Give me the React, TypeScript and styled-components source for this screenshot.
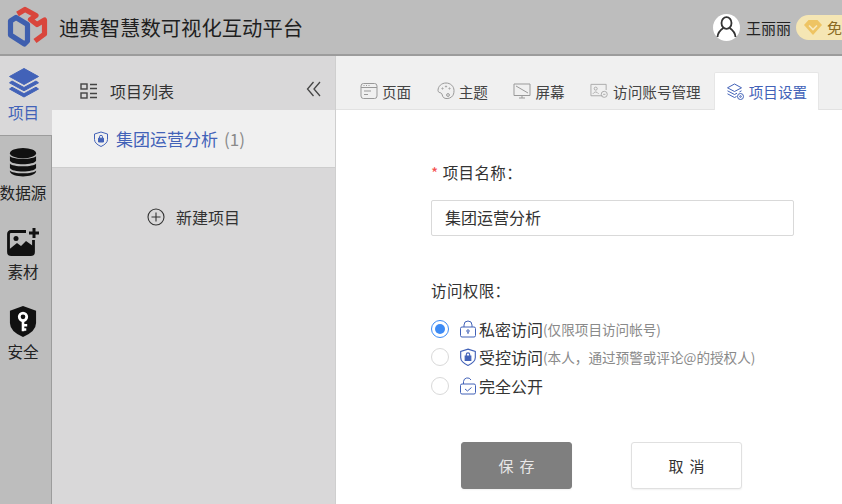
import { FunctionComponent, ReactNode } from 'react';
import styled, { createGlobalStyle } from 'styled-components';

const BLUE = '#4262b8';

const GlobalStyle = createGlobalStyle`
  html, body {
    margin: 0;
    padding: 0;
    background: #fff;
  }
  * {
    box-sizing: border-box;
  }
  body {
    font-family: "Noto Sans CJK SC", "Liberation Sans", sans-serif;
  }
`;

const Page = styled.div`
  width: 842px;
  height: 504px;
  display: flex;
  flex-direction: column;
  overflow: hidden;
`;

const Header = styled.header`
  height: 56px;
  flex: none;
  display: flex;
  align-items: center;
  background: #bdbdbd;
  border-bottom: 2px solid #9c9c9c;
  padding-left: 6px;
`;

const Title = styled.h1`
  margin: 0 0 0 11px;
  font-size: 20.35px;
  font-weight: 400;
  line-height: 28px;
  color: #1f1f1f;
  white-space: nowrap;
`;

const UserArea = styled.div`
  margin-left: auto;
  display: flex;
  align-items: center;
  width: 129px;
  flex: none;
`;

const Avatar = styled.div`
  width: 27px;
  height: 27px;
  border-radius: 50%;
  background: #fff;
  display: flex;
  align-items: center;
  justify-content: center;
  flex: none;
`;

const UserName = styled.span`
  margin-left: 6px;
  font-size: 15px;
  color: #222;
  white-space: nowrap;
`;

const Badge = styled.div`
  margin-left: 5px;
  flex: 1;
  height: 25px;
  border-radius: 13px 0 0 13px;
  background: #f5e6b4;
  display: flex;
  align-items: center;
  padding-left: 8px;
  gap: 5px;
  font-size: 15px;
  color: #8a6a22;
  white-space: nowrap;
`;

const Body = styled.div`
  flex: 1;
  min-height: 0;
  display: flex;
`;

const SideRail = styled.nav`
  width: 52px;
  flex: none;
  display: flex;
  flex-direction: column;
  background: #bdbdbd;
  border-right: 1px solid #9c9c9c;
`;

const RailItem = styled.div<{ $active?: boolean }>`
  height: 79.5px;
  flex: none;
  margin-right: ${({ $active }) => ($active ? '-1px' : '0')};
  padding: 11px 5px 0 0;
  display: flex;
  flex-direction: column;
  align-items: center;
  background: ${({ $active }) => ($active ? '#d9d8d9' : 'transparent')};
  border-bottom: ${({ $active }) => ($active ? '1px solid #9c9c9c' : 'none')};
  color: ${({ $active }) => ($active ? BLUE : '#222')};
`;

const RailIcon = styled.span`
  height: 32px;
  flex: none;
  display: flex;
  align-items: center;
`;

const RailLabel = styled.span`
  margin-top: 2px;
  font-size: 15.6px;
  line-height: 22px;
  white-space: nowrap;
`;

const ProjectPanel = styled.aside`
  width: 284px;
  flex: none;
  display: flex;
  flex-direction: column;
  background: #d9d8d9;
  border-right: 1px solid #cfcfcf;
`;

const PanelHead = styled.div`
  height: 54px;
  flex: none;
  display: flex;
  align-items: center;
  padding: 16px 13px 0 28px;
  font-size: 16px;
  color: #333;
`;

const PanelTitle = styled.span`
  margin-left: 12px;
`;

const Collapse = styled.span`
  margin-left: auto;
  display: flex;
  margin-top: -4px;
`;

const ProjectRow = styled.div`
  height: 58px;
  flex: none;
  display: flex;
  align-items: center;
  padding-left: 41px;
  background: #f0f0f0;
  border-bottom: 1px solid #cdcdcd;
  font-size: 17px;
  color: ${BLUE};
`;

const ProjectName = styled.span`
  margin-left: 7px;
`;

const ProjectCount = styled.span`
  margin-left: 6px;
  color: #8a8a8a;
`;

const NewProject = styled.div`
  margin-top: 38px;
  display: flex;
  align-items: center;
  padding-left: 95px;
  font-size: 16px;
  line-height: 22px;
  color: #333;
  gap: 11px;
`;

const Main = styled.main`
  flex: 1;
  min-width: 0;
  display: flex;
  flex-direction: column;
  background: #fff;
`;

const TabBar = styled.div`
  height: 54px;
  flex: none;
  display: flex;
  align-items: flex-end;
  background: #f0f0f0;
  border-bottom: 1px solid #e2e2e2;
  padding-left: 24px;
`;

const Tab = styled.div<{ $active?: boolean }>`
  height: ${({ $active }) => ($active ? '38px' : '36px')};
  display: flex;
  align-items: center;
  gap: 4px;
  padding: ${({ $active }) => ($active ? '0 11px' : '0')};
  margin-left: ${({ $active }) => ($active ? '-12.5px' : '0')};
  margin-right: ${({ $active }) => ($active ? '0' : '25.5px')};
  margin-bottom: ${({ $active }) => ($active ? '-1px' : '0')};
  font-size: 14.6px;
  white-space: nowrap;
  color: ${({ $active }) => ($active ? BLUE : '#444')};
  background: ${({ $active }) => ($active ? '#fff' : 'transparent')};
  border: ${({ $active }) => ($active ? '1px solid #e6e6e6' : 'none')};
  border-bottom: none;
  border-radius: 2px 2px 0 0;
`;

const Form = styled.form`
  padding: 50px 0 0 95px;
  display: flex;
  flex-direction: column;
`;

const FieldLabel = styled.div`
  font-size: 15.5px;
  line-height: 24px;
  color: #333;
  letter-spacing: 0.4px;
`;

const Required = styled.span`
  color: #f5504f;
  margin-right: 4px;
`;

const NameInput = styled.div`
  margin-top: 16px;
  width: 363px;
  height: 36px;
  border: 1px solid #d9d9d9;
  border-radius: 2px;
  display: flex;
  align-items: center;
  padding: 0 0 3px 13px;
  font-size: 16px;
  color: #333;
`;

const AccessLabel = styled(FieldLabel)`
  margin-top: 42px;
`;

const RadioList = styled.div`
  margin-top: 12.5px;
  display: flex;
  flex-direction: column;
`;

const RadioRow = styled.div`
  height: 28.5px;
  display: flex;
  align-items: center;
`;

const Radio = styled.span<{ $checked?: boolean }>`
  width: 18px;
  height: 18px;
  flex: none;
  border-radius: 50%;
  border: 1px solid ${({ $checked }) => ($checked ? '#3d8bf5' : '#d9d9d9')};
  background: #fff;
  display: flex;
  align-items: center;
  justify-content: center;
  margin-right: 10px;
  &::after {
    content: '';
    display: ${({ $checked }) => ($checked ? 'block' : 'none')};
    width: 10px;
    height: 10px;
    border-radius: 50%;
    background: #3d8bf5;
  }
`;

const RadioIcon = styled.span`
  width: 18px;
  height: 18px;
  flex: none;
  display: flex;
  margin-right: 2px;
`;

const RadioText = styled.span`
  font-size: 16px;
  color: #333;
  white-space: nowrap;
`;

const RadioHint = styled.span`
  font-size: 13.6px;
  color: #8a8a8a;
  white-space: nowrap;
`;

const Actions = styled.div`
  margin: 42px 0 0 30px;
  display: flex;
  gap: 59px;
`;

const Button = styled.div<{ $primary?: boolean }>`
  width: 111px;
  height: 47px;
  padding-left: 6px;
  border-radius: 3px;
  display: flex;
  align-items: center;
  justify-content: center;
  font-size: 15px;
  letter-spacing: 6px;
  color: ${({ $primary }) => ($primary ? '#e8e8e8' : '#333')};
  background: ${({ $primary }) => ($primary ? '#7f7f7f' : '#fff')};
  border: 1px solid ${({ $primary }) => ($primary ? '#7f7f7f' : '#e0e0e0')};
  box-shadow: 0 1px 2px rgba(0, 0, 0, 0.06);
`;

const Logo = () => (
  <svg width="42" height="42" viewBox="6 6 42 42" fill="none" strokeLinejoin="round" strokeWidth="5.2">
    <path d="M10.5 21 L16 17.5 L27.5 24.5 V41 L24.5 44 L10.5 35 Z" stroke="#3f5fae" />
    <path d="M17.5 14 L25 9.5 L36 15.5 L30.5 19.5 L37 24.5 L44.5 20 V34 L35 41" stroke="#d9463c" />
  </svg>
);

const LayersSolid = () => (
  <svg width="32" height="32" viewBox="0 0 32 32" fill={BLUE} stroke={BLUE} strokeLinejoin="round">
    <path d="M16 1.5 L30.5 9.5 L16 17.5 L1.5 9.5 Z" />
    <path d="M4 14 L16 20.5 L28 14 L30.5 15.8 L16 23.8 L1.5 15.8 Z" />
    <path d="M4 20.2 L16 26.7 L28 20.2 L30.5 22 L16 30 L1.5 22 Z" />
  </svg>
);

const Database = () => (
  <svg width="28" height="31" viewBox="0 0 30 32" fill="#111">
    <ellipse cx="15" cy="6" rx="14" ry="5.5" />
    <path d="M1 9 C3 13 27 13 29 9 V14 C27 19 3 19 1 14 Z" />
    <path d="M1 17 C3 21 27 21 29 17 V22 C27 27 3 27 1 22 Z" />
    <path d="M1 24.5 C3 28.5 27 28.5 29 24.5 V26 C27 32.5 3 32.5 1 26 Z" />
  </svg>
);

const ImagePlus = () => (
  <svg width="32" height="28" viewBox="0 0 32 28" fill="#111">
    <path
      d="M19 3.5 H4 Q1.5 3.5 1.5 6 V24 Q1.5 26.5 4 26.5 H24 Q26.5 26.5 26.5 24 V12"
      fill="none"
      stroke="#111"
      strokeWidth="2.8"
    />
    <path d="M2 26 V21.5 L10 15 L14 18 L19 13 L26 18 V26 Z" />
    <circle cx="9" cy="10.5" r="2.5" />
    <path d="M25.5 0 H28.5 V3.5 H32 V6.5 H28.5 V10 H25.5 V6.5 H22 V3.5 H25.5 Z" />
  </svg>
);

const ShieldKey = () => (
  <svg width="28" height="31" viewBox="0 0 30 33">
    <path d="M15 0 L29 5 V18 Q29 27 15 33 Q1 27 1 18 V5 Z" fill="#111" />
    <circle cx="15" cy="11.5" r="4" fill="none" stroke="#fff" strokeWidth="3" />
    <path d="M15 15 V27 M15 20.5 H19.5 M15 25 H18.5" stroke="#fff" strokeWidth="2.8" fill="none" />
  </svg>
);

const ListIcon = () => (
  <svg width="18" height="18" viewBox="0 0 18 18" fill="none" stroke="#444" strokeWidth="1.4">
    <rect x="1" y="2" width="6" height="5" />
    <rect x="1" y="11" width="6" height="5" />
    <path d="M10 2.5 H17 M10 6.5 H17 M10 11.5 H17 M10 15.5 H17" />
  </svg>
);

const ChevronsLeft = () => (
  <svg width="16" height="16" viewBox="0 0 16 16" fill="none" stroke="#444" strokeWidth="1.3">
    <path d="M7.5 1 L1.5 8 L7.5 15 M14 1 L8 8 L14 15" />
  </svg>
);

const ShieldLock = ({ size = 16 }: { size?: number }) => (
  <svg width={size} height={size} viewBox="0 0 16 16" fill="none" stroke={BLUE} strokeWidth="1">
    <path d="M8 1 L14.5 3 V8.5 Q14.5 12.5 8 15.5 Q1.5 12.5 1.5 8.5 V3 Z" />
    <path d="M5.5 7.2 H10.5 V11 H5.5 Z" fill={BLUE} />
    <path d="M6.5 7 V5.8 A1.5 1.5 0 0 1 9.5 5.8 V7" />
  </svg>
);

const PlusCircle = () => (
  <svg width="18" height="18" viewBox="0 0 18 18" fill="none" stroke="#333" strokeWidth="1.1">
    <circle cx="9" cy="9" r="8" />
    <path d="M9 4.5 V13.5 M4.5 9 H13.5" />
  </svg>
);

const UserIcon = () => (
  <svg width="21" height="22" viewBox="0 0 21 22" fill="none" stroke="#333" strokeWidth="1.8">
    <ellipse cx="10.5" cy="7" rx="5" ry="5.8" />
    <path d="M1.5 21 C2 15.5 6 13 7.5 12 M19.5 21 C19 15.5 15 13 13.5 12" />
  </svg>
);

const Gem = () => (
  <svg width="18" height="16" viewBox="0 0 18 16">
    <path d="M4.5 1 H13.5 L18 6 L9 16 L0 6 Z" fill="#eec463" />
    <path d="M5 6.5 L9 10.5 L13 6.5" fill="none" stroke="#f8e9bd" strokeWidth="1.6" />
  </svg>
);

const PageIcon = () => (
  <svg width="18" height="18" viewBox="0 0 18 18" fill="none" stroke="#999" strokeWidth="1">
    <rect x="1" y="1.5" width="16" height="15" rx="2.5" />
    <path d="M1 5.5 H17 M4 9 H11 M4 12.5 H8" />
    <path d="M3.5 3.5 H4.5 M6 3.5 H7 M8.5 3.5 H9.5" />
  </svg>
);

const PaletteIcon = () => (
  <svg width="18" height="18" viewBox="0 0 18 18" fill="none" stroke="#999" strokeWidth="1">
    <path d="M9 1 C4.5 1 1 4.3 1 8.5 C1 10.5 3 10.5 4 11 C5.5 11.7 5 14 6.5 15.5 C8 17 12 17 14.5 15 C16.5 13.4 17 11 17 8.5 C17 4.3 13.5 1 9 1 Z" />
    <circle cx="5.5" cy="6.5" r=".6" />
    <circle cx="9" cy="4.5" r=".6" />
    <circle cx="12.5" cy="6.5" r=".6" />
    <circle cx="11" cy="13" r="1.4" />
  </svg>
);

const ScreenIcon = () => (
  <svg width="18" height="18" viewBox="0 0 18 18" fill="none" stroke="#999" strokeWidth="1">
    <path d="M1 2 H17 V13.5 H1 Z M6 16 H12 M9 13.5 V16 M3 4 L15 11" />
  </svg>
);

const AccountIcon = () => (
  <svg width="19" height="18" viewBox="0 0 20 18" fill="none" stroke="#aaa" strokeWidth="1">
    <path d="M13 14 H1 V2 H17 V8" />
    <circle cx="6" cy="6.5" r="1.6" />
    <path d="M3 12 Q6 8 9 12" />
    <circle cx="15" cy="12.5" r="3.2" />
    <path d="M13.8 12.5 H16.2" />
  </svg>
);

const LayersGear = () => (
  <svg width="19" height="18" viewBox="0 0 19 18" fill="none" stroke={BLUE} strokeWidth="1">
    <path d="M8.5 1 L15.5 4.8 L8.5 8.5 L1.5 4.8 Z" />
    <path d="M1.5 7.8 L8.5 11.5 L11 10.2 M15.5 7.8 L13.5 8.9" />
    <path d="M1.5 10.8 L8.5 14.5 L10.5 13.5" />
    <circle cx="14.5" cy="13.5" r="3" />
    <circle cx="14.5" cy="13.5" r=".8" />
  </svg>
);

const LockClosed = () => (
  <svg width="18" height="18" viewBox="0 0 18 18" fill="none" stroke={BLUE} strokeWidth="1">
    <rect x="1.5" y="7" width="15" height="10" rx="1.5" />
    <path d="M5 7 V5 A4 4 0 0 1 13 5 V7" />
    <circle cx="9" cy="11" r="1.2" />
    <path d="M9 12 V14" />
  </svg>
);

const LockOpen = () => (
  <svg width="18" height="18" viewBox="0 0 18 18" fill="none" stroke={BLUE} strokeWidth="1">
    <rect x="1.5" y="7" width="15" height="10" rx="1.5" />
    <path d="M4.5 7 V4.5 A4 4 0 0 1 12 3" />
    <path d="M6 12 L8.5 14 L12.5 10.5" />
  </svg>
);

const tabs: { label: string; icon: ReactNode }[] = [
  { label: '页面', icon: <PageIcon /> },
  { label: '主题', icon: <PaletteIcon /> },
  { label: '屏幕', icon: <ScreenIcon /> },
  { label: '访问账号管理', icon: <AccountIcon /> },
];

const App: FunctionComponent = () => (
  <Page>
    <GlobalStyle />
    <Header>
      <Logo />
      <Title>迪赛智慧数可视化互动平台</Title>
      <UserArea>
        <Avatar>
          <UserIcon />
        </Avatar>
        <UserName>王丽丽</UserName>
        <Badge>
          <Gem />免
        </Badge>
      </UserArea>
    </Header>
    <Body>
      <SideRail>
        <RailItem $active>
          <RailIcon>
            <LayersSolid />
          </RailIcon>
          <RailLabel>项目</RailLabel>
        </RailItem>
        <RailItem>
          <RailIcon>
            <Database />
          </RailIcon>
          <RailLabel>数据源</RailLabel>
        </RailItem>
        <RailItem>
          <RailIcon>
            <ImagePlus />
          </RailIcon>
          <RailLabel>素材</RailLabel>
        </RailItem>
        <RailItem>
          <RailIcon>
            <ShieldKey />
          </RailIcon>
          <RailLabel>安全</RailLabel>
        </RailItem>
      </SideRail>
      <ProjectPanel>
        <PanelHead>
          <ListIcon />
          <PanelTitle>项目列表</PanelTitle>
          <Collapse>
            <ChevronsLeft />
          </Collapse>
        </PanelHead>
        <ProjectRow>
          <ShieldLock />
          <ProjectName>集团运营分析</ProjectName>
          <ProjectCount>(1)</ProjectCount>
        </ProjectRow>
        <NewProject>
          <PlusCircle />
          新建项目
        </NewProject>
      </ProjectPanel>
      <Main>
        <TabBar>
          {tabs.map(({ label, icon }) => (
            <Tab key={label}>
              {icon}
              {label}
            </Tab>
          ))}
          <Tab $active>
            <LayersGear />
            项目设置
          </Tab>
        </TabBar>
        <Form>
          <FieldLabel>
            <Required>*</Required>项目名称：
          </FieldLabel>
          <NameInput>集团运营分析</NameInput>
          <AccessLabel>访问权限：</AccessLabel>
          <RadioList>
            <RadioRow>
              <Radio $checked />
              <RadioIcon>
                <LockClosed />
              </RadioIcon>
              <RadioText>私密访问</RadioText>
              <RadioHint>(仅限项目访问帐号)</RadioHint>
            </RadioRow>
            <RadioRow>
              <Radio />
              <RadioIcon>
                <ShieldLock size={18} />
              </RadioIcon>
              <RadioText>受控访问</RadioText>
              <RadioHint>(本人，通过预警或评论@的授权人)</RadioHint>
            </RadioRow>
            <RadioRow>
              <Radio />
              <RadioIcon>
                <LockOpen />
              </RadioIcon>
              <RadioText>完全公开</RadioText>
            </RadioRow>
          </RadioList>
          <Actions>
            <Button $primary>保存</Button>
            <Button>取消</Button>
          </Actions>
        </Form>
      </Main>
    </Body>
  </Page>
);

export default App;
